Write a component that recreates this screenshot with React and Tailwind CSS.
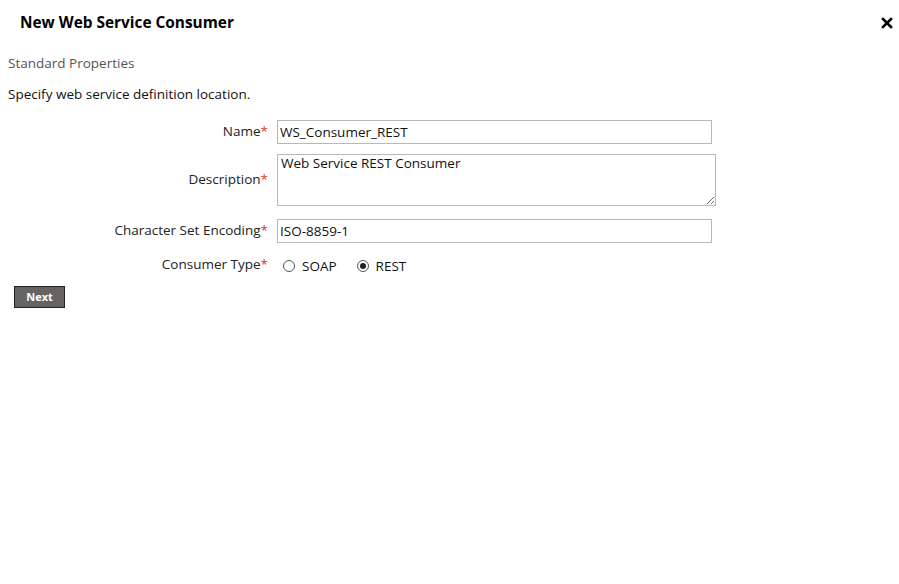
import React from "react";

function Label({ children }) {
  return (
    <div className="w-[270px] shrink-0 pr-[2px] text-right text-[13.5px] text-[#222]">
      {children}
      <span className="text-[#e0342b]">*</span>
    </div>
  );
}

function Radio({ checked, label }) {
  return (
    <label className="flex items-center gap-[7px]">
      <span className="flex h-[12px] w-[12px] items-center justify-center rounded-full border border-[#555] bg-white">
        {checked && <span className="h-[6px] w-[6px] rounded-full bg-[#222]" />}
      </span>
      <span>{label}</span>
    </label>
  );
}

export default function App() {
  return (
    <div className="h-[584px] w-[899px] bg-white font-['Open_Sans',sans-serif] text-[13.5px] text-[#111]">
      <div className="flex items-center justify-between pl-[20px] pr-[6px] pt-[11px]">
        <h1 className="text-[15.4px] font-bold text-black">New Web Service Consumer</h1>
        <svg width="12" height="12" viewBox="0 0 12 12">
          <path d="M2 2 L10 10 M10 2 L2 10" stroke="#000" strokeWidth="2.6" strokeLinecap="square" />
        </svg>
      </div>

      <div className="px-[8px] pt-[19px] text-[13.5px] text-[#555]">Standard Properties</div>
      <div className="px-[8px] pt-[11px] text-[13.5px]">Specify web service definition location.</div>

      <div className="mt-[15px] flex flex-col">
        <div className="flex items-center gap-[7px]">
          <Label>Name</Label>
          <input
            readOnly
            value="WS_Consumer_REST"
            className="h-[24px] w-[435px] border border-[#b8b8b8] px-[2px] text-[13.5px] text-[#111] outline-none"
          />
        </div>
        <div className="mt-[10px] flex items-center gap-[7px]">
          <Label>Description</Label>
          <textarea
            readOnly
            value="Web Service REST Consumer"
            className="h-[52px] w-[439px] resize border border-[#b8b8b8] px-[3px] py-0 text-[13.5px] leading-[17px] text-[#111] outline-none"
          />
        </div>
        <div className="mt-[13px] flex items-center gap-[7px]">
          <Label>Character Set Encoding</Label>
          <input
            readOnly
            value="ISO-8859-1"
            className="h-[24px] w-[435px] border border-[#b8b8b8] px-[2px] text-[13.5px] text-[#111] outline-none"
          />
        </div>
        <div className="mt-[10px] flex items-center gap-[7px]">
          <Label>Consumer Type</Label>
          <div className="flex items-center gap-[20px] pl-[6px] pt-[3px]">
            <Radio label="SOAP" />
            <Radio checked label="REST" />
          </div>
        </div>
      </div>

      <button className="ml-[14px] mt-[10px] h-[22px] w-[51px] border border-[#222] bg-[#646464] text-[11px] font-bold text-white">
        Next
      </button>
    </div>
  );
}
